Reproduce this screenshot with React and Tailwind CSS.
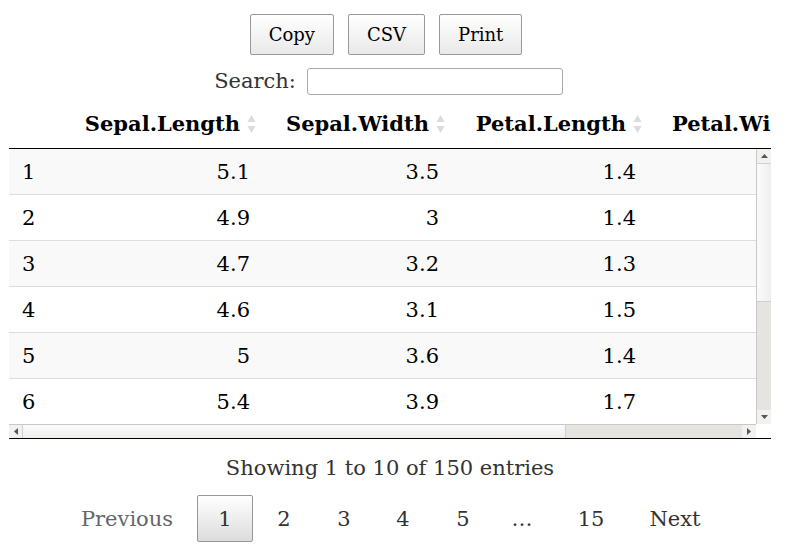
import React from "react";

const rows = [
  ["1", "5.1", "3.5", "1.4", "0.2"],
  ["2", "4.9", "3", "1.4", "0.2"],
  ["3", "4.7", "3.2", "1.3", "0.2"],
  ["4", "4.6", "3.1", "1.5", "0.2"],
  ["5", "5", "3.6", "1.4", "0.2"],
  ["6", "5.4", "3.9", "1.7", "0.4"],
];

function SortIcon() {
  return (
    <svg width="9" height="20" viewBox="0 0 9 20" className="absolute right-[4px] top-1/2 -translate-y-1/2">
      <path d="M4.5 1 L8.5 8 L0.5 8 Z" fill="#dcdcdc" />
      <path d="M4.5 19 L8.5 12 L0.5 12 Z" fill="#dcdcdc" />
    </svg>
  );
}

function Btn({ children }) {
  return (
    <button className="h-[41px] px-[18px] border border-[#999] rounded-[2px] bg-gradient-to-b from-white to-[#e9e9e9] text-[18px] text-black leading-none">
      {children}
    </button>
  );
}

const cols = "grid grid-cols-[66px_185px_189px_197px_200px]";

export default function App() {
  return (
    <div className="w-[790px] h-[548px] bg-white font-['DejaVu_Serif',serif] text-[#333] overflow-hidden px-[9px]">
      <div className="flex justify-center gap-[14px] pt-[14px] pr-[18px]">
        <Btn>Copy</Btn>
        <Btn>CSV</Btn>
        <Btn>Print</Btn>
      </div>
      <div className="flex justify-center items-center mt-[13px] h-[27px] text-[21px] leading-[27px] pr-[13px]">
        <span>Search:</span>
        <div className="ml-[11px] w-[256px] h-[27px] border border-[#aaa] rounded-[3px] bg-white" />
      </div>
      <div className="w-[762px] overflow-hidden">
        <div className={`${cols} w-[837px] h-[53px] pt-[4px] items-center text-[21px] font-bold text-black`}>
          <div />
          <div className="relative text-right pr-[20px] whitespace-nowrap">Sepal.Length<SortIcon /></div>
          <div className="relative text-right pr-[20px] whitespace-nowrap">Sepal.Width<SortIcon /></div>
          <div className="relative text-right pr-[20px] whitespace-nowrap">Petal.Length<SortIcon /></div>
          <div className="relative text-left pl-[26px] whitespace-nowrap">Petal.Width</div>
        </div>
      </div>
      <div className="w-[762px] border-t border-b border-black">
        <div className="flex h-[275px]">
          <div className="w-[747px] overflow-hidden">
            {rows.map((r, i) => (
              <div
                key={i}
                className={`${cols} w-[837px] h-[46px] pt-[3px] items-center text-[21px] text-black border-b border-[#ddd] ${i % 2 === 0 ? "bg-[#f9f9f9]" : "bg-white"}`}
              >
                <div className="pl-[13px]">{r[0]}</div>
                <div className="text-right pr-[10px]">{r[1]}</div>
                <div className="text-right pr-[10px]">{r[2]}</div>
                <div className="text-right pr-[10px]">{r[3]}</div>
                <div className="text-right pr-[10px]">{r[4]}</div>
              </div>
            ))}
          </div>
          <div className="w-[15px] flex flex-col bg-[#e6e4e1] border-l border-[#c8c8c8]">
            <div className="h-[14px] flex items-center justify-center bg-[#f2f1f0]">
              <svg width="7" height="4" viewBox="0 0 7 4"><path d="M3.5 0 L7 4 L0 4Z" fill="#555" /></svg>
            </div>
            <div className="h-[139px] bg-gradient-to-r from-[#fbfbfb] to-[#efeeed] border-t border-b border-[#cfcfcf]" />
            <div className="flex-1" />
            <div className="h-[14px] flex items-center justify-center bg-[#f2f1f0]">
              <svg width="7" height="4" viewBox="0 0 7 4"><path d="M0 0 L7 0 L3.5 4Z" fill="#555" /></svg>
            </div>
          </div>
        </div>
        <div className="flex h-[14px]">
          <div className="w-[747px] flex bg-[#e6e4e1] border-t border-[#c8c8c8]">
            <div className="w-[14px] flex items-center justify-center bg-[#f2f1f0] border-r border-[#cfcfcf]">
              <svg width="4" height="7" viewBox="0 0 4 7"><path d="M0 3.5 L4 0 L4 7Z" fill="#555" /></svg>
            </div>
            <div className="w-[543px] bg-gradient-to-b from-[#fbfbfb] to-[#efeeed] border-r border-[#cfcfcf]" />
            <div className="flex-1" />
            <div className="w-[14px] flex items-center justify-center bg-[#f2f1f0]">
              <svg width="4" height="7" viewBox="0 0 4 7"><path d="M4 3.5 L0 0 L0 7Z" fill="#555" /></svg>
            </div>
          </div>
          <div className="w-[15px] bg-white" />
        </div>
      </div>
      <div className="text-center text-[21px] leading-[28px] mt-[15px] pr-[10px]">Showing 1 to 10 of 150 entries</div>
      <div className="flex items-center mt-[13px] h-[47px] text-[21px] leading-[24px] text-[#333]">
        <span className="ml-[51px] w-[134px] text-center text-[#666]">Previous</span>
        <span className="ml-[3px] w-[56px] h-[47px] flex items-center justify-center border border-[#979797] rounded-[2px] bg-gradient-to-b from-white to-[#dcdcdc]">1</span>
        <span className="ml-[3px] w-[56px] text-center">2</span>
        <span className="ml-[4px] w-[56px] text-center">3</span>
        <span className="ml-[3px] w-[56px] text-center">4</span>
        <span className="ml-[4px] w-[56px] text-center">5</span>
        <span className="ml-[3px] w-[56px] text-center">…</span>
        <span className="ml-[6px] w-[70px] text-center">15</span>
        <span className="ml-[4px] w-[90px] text-center">Next</span>
      </div>
    </div>
  );
}
